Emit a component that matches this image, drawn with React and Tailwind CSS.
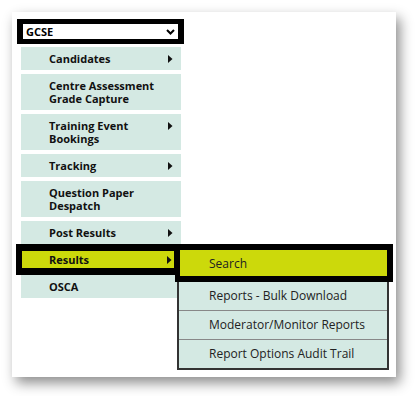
import React from 'react'

const menu = [
  { label: ['Candidates'], arrow: true },
  { label: ['Centre Assessment', 'Grade Capture'] },
  { label: ['Training Event', 'Bookings'], arrow: true },
  { label: ['Tracking'], arrow: true },
  { label: ['Question Paper', 'Despatch'] },
  { label: ['Post Results'], arrow: true },
  { label: ['Results'], arrow: true, active: true },
  { label: ['OSCA'] },
]

const subMenu = ['Reports - Bulk Download', 'Moderator/Monitor Reports', 'Report Options Audit Trail']

function Arrow() {
  return (
    <svg width="5" height="8" viewBox="0 0 5 8" className="absolute right-[8px] top-[8px]">
      <path d="M0 0 L4.5 4 L0 8 Z" fill="#111" />
    </svg>
  )
}

function MenuItem({ item }) {
  if (item.active) {
    return (
      <div className="relative h-[23px]">
        <div className="absolute left-[-5px] top-[-4px] w-[161px] h-[31px] border-l-[6px] border-r-[3px] border-t-[7px] border-b-[7px] border-black bg-[#ccd90b] pl-[27px] text-[11px] font-bold leading-[17px] text-[#111]">
          {item.label[0]}
          <svg width="5" height="8" viewBox="0 0 5 8" className="absolute right-[2px] top-[5px]">
            <path d="M0 0 L4.5 4 L0 8 Z" fill="#111" />
          </svg>
        </div>
      </div>
    )
  }
  return (
    <div className="relative bg-[#d4e9e3] pl-[28px] pt-[5px] pb-[5px] text-[11px] font-bold leading-[13px] text-[#111]">
      {item.label.map((l, i) => (
        <div key={i}>{l}</div>
      ))}
      {item.arrow && <Arrow />}
    </div>
  )
}

export default function App() {
  return (
    <div className="w-[415px] h-[396px] bg-white pl-[12px] pt-[12px]" style={{ fontFamily: '"Open Sans", "Noto Sans", sans-serif' }}>
      <div className="relative w-[384px] h-[365px] bg-white pl-[5px] pt-[7px] shadow-[4px_6px_12px_rgba(0,0,0,0.45)]">
        <div className="w-[167px] h-[25px] border-x-[6px] border-y-[5px] border-black bg-white flex items-center justify-between pl-[3px] pr-[3px]">
          <span className="text-[11px] font-bold leading-none text-black">GCSE</span>
          <svg width="9" height="6" viewBox="0 0 9 6">
            <path d="M1 1 L4.5 4.5 L8 1" stroke="#000" strokeWidth="2" fill="none" />
          </svg>
        </div>

        <div className="ml-[4px] mt-[3px] w-[160px] flex flex-col gap-[4px]">
          {menu.map((item, i) => (
            <MenuItem key={i} item={item} />
          ))}
        </div>

        {/* flyout submenu */}
        <div className="absolute left-[165px] top-[234px] w-[212px] border-2 border-[#333] bg-[#d4e9e3] text-[12px] text-[#222]">
          <div className="relative h-[34px]">
            <div className="absolute left-[-4px] top-[-4px] w-[218px] h-[38px] border-l-[5px] border-r-[6px] border-y-[6px] border-black bg-[#ccd90b] pl-[29px] pt-[2px] leading-[24px]">
              Search
            </div>
          </div>
          {subMenu.map((s, i) => (
            <div
              key={s}
              className={
                i < subMenu.length - 1
                  ? 'h-[29px] border-b border-[#888] pl-[30px] leading-[28px]'
                  : 'h-[28px] pl-[30px] leading-[28px]'
              }
            >
              {s}
            </div>
          ))}
        </div>
      </div>
    </div>
  )
}
